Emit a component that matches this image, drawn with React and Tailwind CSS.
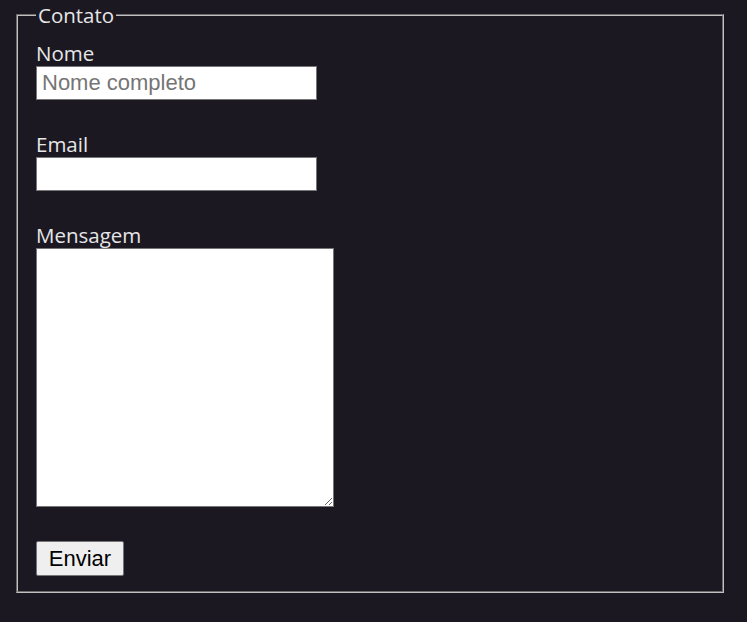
import React from 'react';

export default function App() {
  return (
    <div className="min-h-[622px] w-full bg-[#1b1822] pt-[3px] pb-[28px] pl-4 pr-[23px] font-['Open_Sans',sans-serif] text-[#e6e6e6]">
      <form onSubmit={(e) => e.preventDefault()}>
        <fieldset className="border-2 [border-style:groove] border-[#c0c0c0] pl-[18px] pr-3 pt-0 pb-[15px]">
          <legend className="px-[2px] text-[20.5px] leading-[24px]">Contato</legend>

          <label htmlFor="nome" className="block text-[20.5px] leading-[25px] mt-[14px]">Nome</label>
          <input
            id="nome"
            type="text"
            placeholder="Nome completo"
            className="block w-[281px] h-[34px] bg-white border border-[#767676] px-[5px] text-[22px] text-black placeholder:text-[#757575] font-['Liberation_Sans',Arial,sans-serif]"
          />

          <label htmlFor="email" className="block text-[20.5px] leading-[25px] mt-[32px]">Email</label>
          <input
            id="email"
            type="email"
            className="block w-[281px] h-[34px] bg-white border border-[#767676] px-[5px] text-[22px] text-black font-['Liberation_Sans',Arial,sans-serif]"
          />

          <label htmlFor="mensagem" className="block text-[20.5px] leading-[25px] mt-[32px]">Mensagem</label>
          <textarea
            id="mensagem"
            className="block w-[298px] h-[259px] bg-white border border-[#767676] text-[20px] text-black font-['Liberation_Sans',Arial,sans-serif]"
          />

          <button
            type="submit"
            className="block mt-[34px] w-[88px] h-[35px] bg-[#efefef] border border-[#767676] rounded-[2px] text-[22px] text-black font-['Liberation_Sans',Arial,sans-serif]"
          >
            Enviar
          </button>
        </fieldset>
      </form>
    </div>
  );
}
